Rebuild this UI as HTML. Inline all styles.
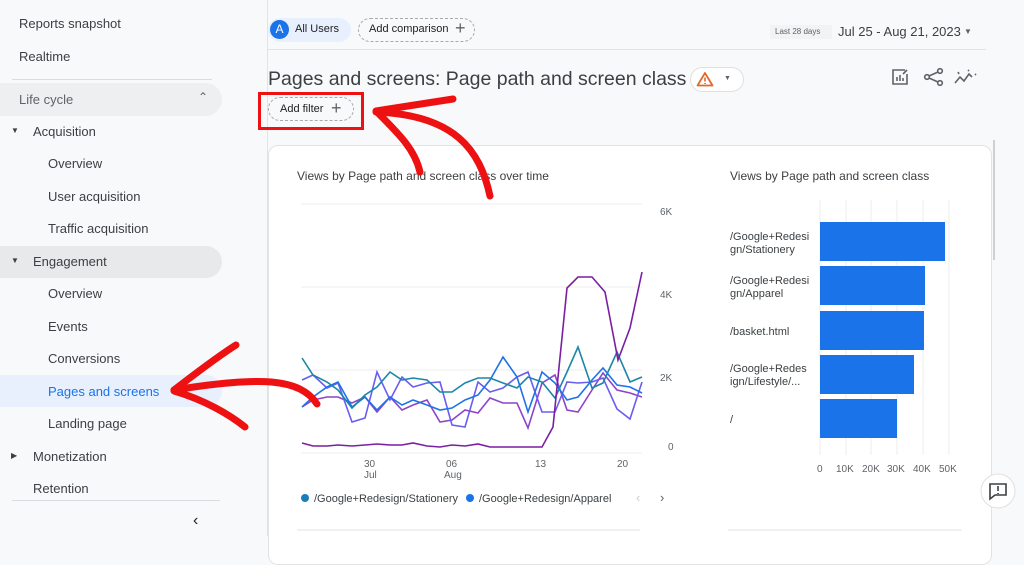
<!DOCTYPE html>
<html><head><meta charset="utf-8"><style>
*{margin:0;padding:0;box-sizing:border-box}
body{width:1024px;height:536px;overflow:hidden;background:#f8f9fb;font-family:"Liberation Sans",Arial,sans-serif;color:#202124;position:relative}
.a{position:absolute;white-space:nowrap}
.side{position:absolute;left:0;top:0;width:268px;height:536px;background:#f8f9fb;border-right:1px solid #e3e3e3}
.it{position:absolute;font-size:13px;color:#3c4043}
.card{position:absolute;left:268px;top:145px;width:724px;height:420px;background:#fff;border:1px solid #e3e3e3;border-radius:10px}
</style></head><body>
<div class="side">
<div class="it" style="left:19px;top:16px">Reports snapshot</div>
<div class="it" style="left:19px;top:49px">Realtime</div>
<div class="a" style="left:12px;top:79px;width:200px;height:1px;background:#dadce0"></div>
<div class="a" style="left:0;top:83px;width:222px;height:33px;background:#eeeff1;border-radius:0 17px 17px 0"></div>
<div class="it" style="left:19px;top:92px;color:#5f6368">Life cycle</div>
<div class="it" style="left:198px;top:90px;color:#5f6368;font-size:12px">&#8963;</div>
<div class="it" style="left:11px;top:126px;font-size:8px">&#9660;</div>
<div class="it" style="left:33px;top:124px">Acquisition</div>
<div class="it" style="left:48px;top:156px">Overview</div>
<div class="it" style="left:48px;top:189px">User acquisition</div>
<div class="it" style="left:48px;top:221px">Traffic acquisition</div>
<div class="a" style="left:0;top:246px;width:222px;height:32px;background:#e8e9eb;border-radius:0 16px 16px 0"></div>
<div class="it" style="left:11px;top:256px;font-size:8px">&#9660;</div>
<div class="it" style="left:33px;top:254px">Engagement</div>
<div class="it" style="left:48px;top:286px">Overview</div>
<div class="it" style="left:48px;top:319px">Events</div>
<div class="it" style="left:48px;top:351px">Conversions</div>
<div class="a" style="left:0;top:375px;width:222px;height:32px;background:#e8f0fe;border-radius:0 16px 16px 0"></div>
<div class="it" style="left:48px;top:384px;color:#1a73e8">Pages and screens</div>
<div class="it" style="left:48px;top:416px">Landing page</div>
<div class="it" style="left:11px;top:451px;font-size:8px">&#9654;</div>
<div class="it" style="left:33px;top:449px">Monetization</div>
<div class="it" style="left:33px;top:481px">Retention</div>
<div class="a" style="left:12px;top:500px;width:208px;height:1px;background:#dadce0"></div>
<div class="it" style="left:193px;top:512px;font-size:16px;color:#202124">&#8249;</div>
</div>

<div class="a" style="left:268px;top:18px;width:83px;height:24px;background:#e8f0fe;border-radius:12px"></div>
<div class="a" style="left:270px;top:20px;width:19px;height:19px;border-radius:50%;background:#1a73e8;color:#fff;font-size:12px;text-align:center;line-height:19px">A</div>
<div class="a" style="left:295px;top:23px;font-size:11px">All Users</div>
<div class="a" style="left:358px;top:18px;width:117px;height:24px;border:1px dashed #aaa;border-radius:12px"></div>
<div class="a" style="left:369px;top:23px;font-size:11px;color:#202124">Add comparison</div>
<div class="a" style="left:455px;top:18px;font-size:18px;color:#5f6368">+</div>
<div class="a" style="left:770px;top:25px;width:62px;height:14px;background:#f1f3f4"></div>
<div class="a" style="left:775px;top:27px;font-size:8px;color:#5f6368">Last 28 days</div>
<div class="a" style="left:838px;top:24px;font-size:13px;color:#3c4043">Jul 25 - Aug 21, 2023</div>
<div class="a" style="left:964px;top:27px;font-size:8px;color:#5f6368">&#9660;</div>
<div class="a" style="left:268px;top:49px;width:718px;height:1px;background:#e3e3e3"></div>

<div class="a" style="left:268px;top:68px;font-size:19.5px;color:#3c4043">Pages and screens: Page path and screen class</div>
<div class="a" style="left:690px;top:67px;width:54px;height:25px;border:1px solid #e0e0e0;border-radius:13px;background:#fff"></div>
<svg class="a" style="left:696px;top:71px" width="18" height="16" viewBox="0 0 18 16"><path d="M9 2L16.5 14.5H1.5Z" fill="none" stroke="#e06a2c" stroke-width="1.8" stroke-linejoin="round"/><path d="M9 6.5v4M9 12v1" stroke="#e06a2c" stroke-width="1.6"/></svg>
<div class="a" style="left:724px;top:75px;font-size:7px;color:#5f6368">&#9660;</div>
<svg class="a" style="left:888px;top:66px" width="90" height="22" viewBox="0 0 90 22" fill="none" stroke="#5f6368" stroke-width="1.6">
<path d="M17 4H5v14h14V8"/><path d="M9 15v-4M12 15v-6M15 15v-3"/><path d="M15 8l4-4"/>
<circle cx="52" cy="5" r="2.3"/><circle cx="39" cy="11" r="2.3"/><circle cx="52" cy="17" r="2.3"/><path d="M41 10l9-4M41 12l9 4"/>
<path d="M67 17l5-6 4 4 5-7 3 3"/><path d="M70 6l1 2M80 4l1 1M87 8l1 1"/>
</svg>

<div class="a" style="left:268px;top:97px;width:86px;height:24px;border:1px dashed #aaa;border-radius:12px"></div>
<div class="a" style="left:280px;top:103px;font-size:11px">Add filter</div>
<div class="a" style="left:331px;top:98px;font-size:18px;color:#5f6368">+</div>
<div class="a" style="left:258px;top:92px;width:106px;height:38px;border:3px solid #ee1111"></div>

<div class="card"></div>
<div class="a" style="left:297px;top:169px;font-size:12px;color:#3c4043">Views by Page path and screen class over time</div>
<div class="a" style="left:730px;top:169px;font-size:12px;color:#3c4043">Views by Page path and screen class</div>

<svg class="a" style="left:0;top:0" width="1024" height="536">
<g stroke="#ececec" stroke-width="1"><path d="M301 204H642M301 287H642M301 370H642M301 453H642"/>
<path d="M820 200V455M846 200V455M871 200V455M897 200V455M923 200V455M949 200V455"/></g>
<g font-size="10" fill="#5f6368" font-family="Liberation Sans,Arial,sans-serif">
<text x="660" y="215">6K</text><text x="660" y="298">4K</text><text x="660" y="381">2K</text><text x="668" y="450">0</text>
<text x="364" y="467">30</text><text x="364" y="478">Jul</text><text x="446" y="467">06</text><text x="444" y="478">Aug</text>
<text x="535" y="467">13</text><text x="617" y="467">20</text>
<text x="817" y="472">0</text><text x="836" y="472">10K</text><text x="862" y="472">20K</text><text x="887" y="472">30K</text><text x="913" y="472">40K</text><text x="939" y="472">50K</text>
</g>
<g fill="none" stroke-width="1.6">
<polyline stroke="#8e44c9" points="302,407 313,400 327,397 338,397 352,403 365,397 377,412 390,397 402,410 413,405 427,400 440,422 452,420 465,410 478,413 490,398 503,403 517,403 528,428 542,383 555,375 567,410 578,412 592,390 603,373 617,390 630,393 642,397"/>
<polyline stroke="#6a5df0" points="302,380 313,375 327,388 338,383 352,422 365,418 377,372 390,400 402,377 413,387 427,383 440,382 452,425 465,427 478,382 490,392 503,388 517,377 528,372 542,412 555,412 567,382 578,383 592,382 603,378 617,409 630,419 642,382"/>
<polyline stroke="#1e73e8" points="302,407 313,397 327,387 338,382 352,407 365,397 377,410 390,397 402,405 413,400 427,405 440,410 452,408 465,400 478,395 490,380 503,357 517,377 528,412 542,372 555,383 567,400 578,397 592,380 603,368 617,385 630,387 642,393"/>
<polyline stroke="#1c86a8" points="302,358 313,375 327,382 338,390 352,408 365,395 377,387 390,372 402,380 413,378 427,380 440,392 452,392 465,383 478,378 490,378 503,383 517,388 528,377 542,382 555,398 567,372 578,347 592,388 603,383 617,352 630,382 642,377"/>
<polyline stroke="#7b1fa2" points="302,443 313,446 327,446 338,445 352,446 365,445 377,444 390,445 402,445 413,443 427,446 440,447 452,445 465,446 478,444 490,447 503,447 517,447 528,447 542,447 553,427 567,288 578,277 592,277 605,292 618,360 630,328 642,272"/>
</g>
<g fill="#1a73e8"><rect x="820" y="222" width="125" height="39"/><rect x="820" y="266" width="105" height="39"/><rect x="820" y="311" width="104" height="39"/><rect x="820" y="355" width="94" height="39"/><rect x="820" y="399" width="77" height="39"/></g>
<g font-size="11" fill="#3c4043" font-family="Liberation Sans,Arial,sans-serif">
<text x="730" y="240">/Google+Redesi</text><text x="730" y="253">gn/Stationery</text>
<text x="730" y="284">/Google+Redesi</text><text x="730" y="297">gn/Apparel</text>
<text x="730" y="335">/basket.html</text>
<text x="730" y="372">/Google+Redes</text><text x="730" y="385">ign/Lifestyle/...</text>
<text x="730" y="423">/</text>
</g>
<circle cx="305" cy="498" r="4" fill="#1a7fb8"/><circle cx="470" cy="498" r="4" fill="#1a73e8"/>
<g font-size="11" fill="#3c4043" font-family="Liberation Sans,Arial,sans-serif"><text x="314" y="502">/Google+Redesign/Stationery</text><text x="479" y="502">/Google+Redesign/Apparel</text></g>
<text x="636" y="502" font-size="13" fill="#ccc">&#8249;</text><text x="660" y="502" font-size="13" fill="#5f6368">&#8250;</text>
<path d="M297 530H640M728 530H962" stroke="#e3e3e3"/>
<path d="M994 140V260" stroke="#d0d0d0" stroke-width="2"/>
<circle cx="998" cy="491" r="17" fill="#fff" stroke="#e0e0e0"/>
<path d="M990 484h16v11h-11l-5 4z" fill="none" stroke="#3c4043" stroke-width="1.6"/><path d="M998 486v5M998 493v1" stroke="#3c4043" stroke-width="1.6"/>
<g fill="none" stroke="#ee1111" stroke-width="7" stroke-linecap="round" stroke-linejoin="round">
<path d="M490 196C480 150 455 115 376 112"/><path d="M376 111L453 99"/><path d="M378 113C400 135 415 150 420 172"/>
<path d="M317 404C300 378 260 376 174 390"/><path d="M174 390C200 370 220 355 236 345"/><path d="M174 391C205 400 230 415 245 427"/>
</g>
</svg>
</body></html>
